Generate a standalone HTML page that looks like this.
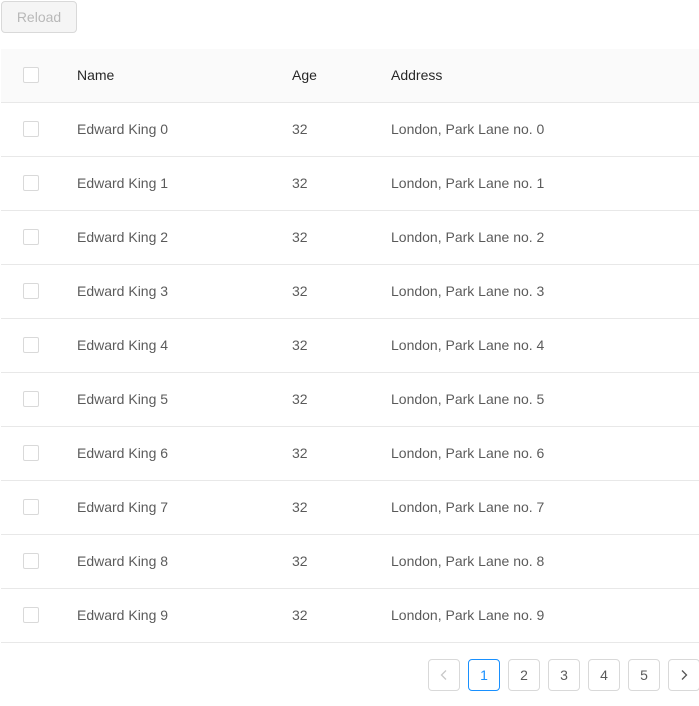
<!DOCTYPE html>
<html><head><style>
*{box-sizing:border-box;margin:0;padding:0}
body{width:699px;height:706px;overflow:hidden;background:#fff;font-family:"Liberation Sans",sans-serif;font-size:14px;color:rgba(0,0,0,.65);position:relative}
.btn{position:absolute;left:1px;top:1px;width:76px;height:32px;border:1px solid #d9d9d9;border-radius:4px;background:#f5f5f5;color:rgba(0,0,0,.25);text-align:center;line-height:30px}
.row{position:absolute;left:1px;width:698px;height:54px;border-bottom:1px solid #e8e8e8}
.row span{position:absolute;top:0;line-height:53px}
.cb{position:absolute;left:22px;top:18px;width:16px;height:16px;border:1px solid #d9d9d9;border-radius:2px;background:#fff}
.head{background:#fafafa;color:rgba(0,0,0,.85)}
.pg{position:absolute;top:659px;width:32px;height:32px;border:1px solid #d9d9d9;border-radius:4px;text-align:center;line-height:30px;color:rgba(0,0,0,.65)}
</style></head><body>
<div class="btn">Reload</div>
<div class="row head" style="top:49px"><div class="cb"></div><span style="left:76px">Name</span><span style="left:291px">Age</span><span style="left:390px">Address</span></div>
<div class="row" style="top:103px"><div class="cb"></div><span style="left:76px">Edward King 0</span><span style="left:291px">32</span><span style="left:390px">London, Park Lane no. 0</span></div>
<div class="row" style="top:157px"><div class="cb"></div><span style="left:76px">Edward King 1</span><span style="left:291px">32</span><span style="left:390px">London, Park Lane no. 1</span></div>
<div class="row" style="top:211px"><div class="cb"></div><span style="left:76px">Edward King 2</span><span style="left:291px">32</span><span style="left:390px">London, Park Lane no. 2</span></div>
<div class="row" style="top:265px"><div class="cb"></div><span style="left:76px">Edward King 3</span><span style="left:291px">32</span><span style="left:390px">London, Park Lane no. 3</span></div>
<div class="row" style="top:319px"><div class="cb"></div><span style="left:76px">Edward King 4</span><span style="left:291px">32</span><span style="left:390px">London, Park Lane no. 4</span></div>
<div class="row" style="top:373px"><div class="cb"></div><span style="left:76px">Edward King 5</span><span style="left:291px">32</span><span style="left:390px">London, Park Lane no. 5</span></div>
<div class="row" style="top:427px"><div class="cb"></div><span style="left:76px">Edward King 6</span><span style="left:291px">32</span><span style="left:390px">London, Park Lane no. 6</span></div>
<div class="row" style="top:481px"><div class="cb"></div><span style="left:76px">Edward King 7</span><span style="left:291px">32</span><span style="left:390px">London, Park Lane no. 7</span></div>
<div class="row" style="top:535px"><div class="cb"></div><span style="left:76px">Edward King 8</span><span style="left:291px">32</span><span style="left:390px">London, Park Lane no. 8</span></div>
<div class="row" style="top:589px"><div class="cb"></div><span style="left:76px">Edward King 9</span><span style="left:291px">32</span><span style="left:390px">London, Park Lane no. 9</span></div>
<div class="pg" style="left:428px"><svg width="12" height="12" viewBox="0 0 12 12" style="margin-top:9px"><path d="M8 1.5L3.5 6L8 10.5" fill="none" stroke="#c8c8c8" stroke-width="1.3"/></svg></div>
<div class="pg" style="left:468px;border-color:#1890ff;color:#1890ff">1</div>
<div class="pg" style="left:508px">2</div>
<div class="pg" style="left:548px">3</div>
<div class="pg" style="left:588px">4</div>
<div class="pg" style="left:628px">5</div>
<div class="pg" style="left:668px"><svg width="12" height="12" viewBox="0 0 12 12" style="margin-top:9px"><path d="M4 1.5L8.5 6L4 10.5" fill="none" stroke="#555" stroke-width="1.3"/></svg></div>
</body></html>
